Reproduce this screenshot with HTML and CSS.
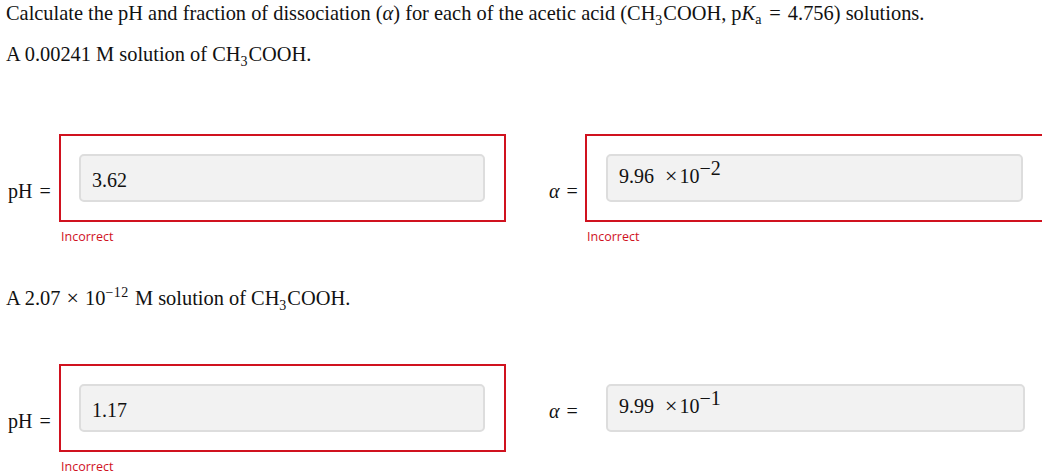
FILE: index.html
```html
<!DOCTYPE html>
<html>
<head>
<meta charset="utf-8">
<link rel="stylesheet" href="styles.css">
</head>
<body>
<p class="line first">Calculate the pH and fraction of dissociation (<i>α</i>) for each of the acetic acid (CH<sub>3</sub>COOH, p<i>K</i><sub class="a">a</sub><span class="eq">=</span>4.756) solutions.</p>
<p class="line second">A 0.00241 M solution of CH<sub>3</sub>COOH.</p>

<div class="row row-one">
  <div class="field">
    <div class="label label-ph">pH<span class="eq">=</span></div>
    <div class="group">
      <div class="box incorrect">
        <div class="input">3.62</div>
      </div>
      <div class="msg">Incorrect</div>
    </div>
  </div>
  <div class="field">
    <div class="label label-a"><i>α</i><span class="eq">=</span></div>
    <div class="group">
      <div class="box incorrect wide">
        <div class="input alpha">9.96&nbsp; <span class="mul">×</span>10<sup class="exp">−2</sup></div>
      </div>
      <div class="msg">Incorrect</div>
    </div>
  </div>
</div>

<p class="line third">A 2.07 <span class="times">×</span> 10<sup class="small">−12</sup> M solution of CH<sub>3</sub>COOH.</p>

<div class="row row-two">
  <div class="field">
    <div class="label label-ph">pH<span class="eq">=</span></div>
    <div class="group">
      <div class="box incorrect">
        <div class="input">1.17</div>
      </div>
      <div class="msg">Incorrect</div>
    </div>
  </div>
  <div class="field field-plain">
    <div class="label label-a label-plain"><i>α</i><span class="eq">=</span></div>
    <div class="group">
      <div class="box plain wide">
        <div class="input alpha">9.99&nbsp; <span class="mul">×</span>10<sup class="exp">−1</sup></div>
      </div>
    </div>
  </div>
</div>
</body>
</html>
```
FILE: styles.css
```css
html, body {
  margin: 0;
  padding: 0;
  background: #fff;
  overflow: hidden;
}
body {
  width: 1042px;
  height: 475px;
  padding: 0 0 0 6px;
  box-sizing: border-box;
  font-family: "Liberation Serif", "Times New Roman", serif;
  font-size: 20px;
  color: #111;
}
.line {
  margin: 0;
  line-height: 24px;
  white-space: nowrap;
  font-size: 20.4px;
}
.first { padding-top: 1px; }
.second { margin-top: 17px; }
.third { margin-top: 41px; }
sub {
  font-size: 14px;
  vertical-align: -5px;
  line-height: 0;
  padding-right: 1px;
}
sub.a { font-size: 14px; vertical-align: -4px; }
.eq { padding: 0 7px; }
.times { padding: 0 1px; font-size: 22px; line-height: 0; }
sup.small {
  font-size: 14px;
  vertical-align: 8px;
  line-height: 0;
  letter-spacing: 0.5px;
  padding-right: 1px;
}
.row {
  display: flex;
  align-items: flex-start;
}
.row-one { margin-top: 68px; }
.row-two { margin-top: 54px; }
.field {
  display: flex;
  align-items: flex-start;
}
.label {
  white-space: nowrap;
  line-height: 24px;
  box-sizing: border-box;
}
.label .eq { padding: 0 0 0 7px; }
.label-ph {
  width: 53px;
  padding-left: 2px;
  padding-top: 45px;
}
.label-a {
  width: 79px;
  padding-left: 43px;
  padding-top: 45px;
}
.label-plain { padding-top: 35px; }
.field-plain .group { padding-top: 18px; }
.box {
  box-sizing: border-box;
  width: 447px;
  padding: 18px 19px 18px 18px;
  border: 2px solid transparent;
}
.box.wide {
  width: 470px;
  padding-left: 19px;
  padding-right: 30px;
}
.box.plain { padding-top: 2px; border: 0; padding-left: 21px; }
.box.incorrect { border-color: #d0121f; }
.input {
  height: 48px;
  box-sizing: border-box;
  border: 2px solid #dddddd;
  border-radius: 5px;
  background: #f2f2f2;
  padding: 12px 11px 0 11px;
  line-height: 24px;
  white-space: nowrap;
}
.input.alpha { padding-top: 8px; }
.mul { font-size: 22px; padding: 0 2px 0 1px; line-height: 0; }
sup.exp {
  font-size: 20px;
  vertical-align: 8px;
  line-height: 0;
}
.msg {
  font-family: "Open Sans", "Liberation Sans", sans-serif;
  font-size: 12.5px;
  line-height: 16px;
  color: #d0121f;
  margin-top: 7px;
  padding-left: 2px;
}
```
